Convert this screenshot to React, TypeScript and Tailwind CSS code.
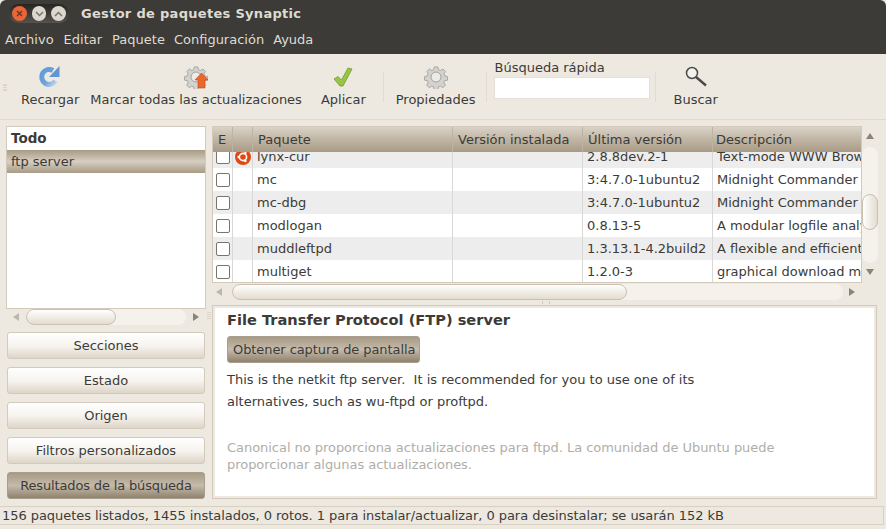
const rows = [
  ["lynx-cur", "", "2.8.8dev.2-1", "Text-mode WWW Browser"],
  ["mc", "", "3:4.7.0-1ubuntu2", "Midnight Commander"],
  ["mc-dbg", "", "3:4.7.0-1ubuntu2", "Midnight Commander"],
  ["modlogan", "", "0.8.13-5", "A modular logfile analyzer"],
  ["muddleftpd", "", "1.3.13.1-4.2build2", "A flexible and efficient FTP"],
  ["multiget", "", "1.2.0-3", "graphical download manager"],
];

const cols = ["w-[130px]", "w-[130px]"];

function Reload() {
  return (
    <svg width="24" height="24" viewBox="0 0 24 24">
      <defs>
        <linearGradient id="rl" x1="0" y1="0" x2="1" y2="1">
          <stop offset="0" stopColor="#5f9ad8" />
          <stop offset="0.6" stopColor="#6fa3dc" />
          <stop offset="1" stopColor="#c4d8ee" />
        </linearGradient>
      </defs>
      <path d="M17.5 16A7.5 7.5 0 1 1 15 5.5" fill="none" stroke="url(#rl)" strokeWidth="5" />
      <polygon points="21.5,1 21.5,12 11,12" fill="#5f97d4" />
    </svg>
  );
}

function Gear({ arrow }: { arrow?: boolean }) {
  return (
    <svg width="24" height="24" viewBox="0 0 24 24">
      <path
        d="M10 1h4l.6 3 2.2.9 2.6-1.7 2.8 2.8-1.7 2.6.9 2.2 3 .6v4l-3 .6-.9 2.2 1.7 2.6-2.8 2.8-2.6-1.7-2.2.9-.6 3h-4l-.6-3-2.2-.9-2.6 1.7-2.8-2.8 1.7-2.6-.9-2.2-3-.6v-4l3-.6.9-2.2L2 6l2.8-2.8 2.6 1.7 2.2-.9Z"
        transform="translate(1 1) scale(.92)"
        fill="#d3d2ce"
        stroke="#a3a29e"
      />
      <circle cx="12" cy="12" r="5" fill="#ecebe7" stroke="#a3a29e" />
      {arrow && <polygon points="17.5,8 24,15 21,15 21,23 14,23 14,15 11,15" fill="#e9682c" stroke="#c24a18" strokeWidth="0.6" />}
    </svg>
  );
}

function Arrow({ dir, dim }: { dir: "l" | "r" | "u" | "d"; dim?: boolean }) {
  const p = { l: "6,0 6,8 0,4", r: "0,0 0,8 6,4", u: "0,6 8,6 4,0", d: "0,0 8,0 4,6" }[dir];
  return (
    <svg width="8" height="8" viewBox="0 0 8 8" className="shrink-0">
      <polygon points={p} fill={dim ? "#bdb8ad" : "#8a8478"} />
    </svg>
  );
}

function ToolItem({ label, icon, className }: { label: string; icon: React.ReactNode; className: string }) {
  return (
    <div className={"flex flex-col items-center " + className}>
      <div className="h-[24px] w-[24px] flex items-center justify-center">{icon}</div>
      <span className="mt-[1px] leading-[20px] text-[#3c3b37]">{label}</span>
    </div>
  );
}

function Sep({ className }: { className: string }) {
  return <div className={"w-px h-[30px] bg-[#e2dccf] " + className} />;
}

function SideButton({ label, active }: { label: string; active?: boolean }) {
  return (
    <div
      className={
        "h-[27px] flex items-center justify-center rounded-[3px] border text-[#3c3b37] " +
        (active
          ? "tracking-[-0.15px] border-[#a89e8c] bg-gradient-to-b from-[#a89a85] via-[#c5bbac] to-[#8f826e]"
          : "border-[#d3cabb] bg-gradient-to-b from-white via-[#f7f4ef] to-[#ddd5c8]")
      }
    >
      {label}
    </div>
  );
}

export default function App() {
  return (
    <div
      className="w-[886px] h-[529px] overflow-hidden flex flex-col bg-[#ede9e1] text-[13px] text-[#3c3b37]"
      style={{ fontFamily: '"DejaVu Sans", sans-serif' }}
    >
      <div className="h-[54px] rounded-t-[6px] bg-[#3c3b37] text-[#dfdbd2] shrink-0">
        <div className="h-[27px] flex items-center pl-[9px]">
          <div className="flex items-center gap-[5px] h-[19px] w-[60px] rounded-full bg-gradient-to-b from-[#262522] to-[#55534e] px-[3px]">
            <div className="w-[15px] h-[15px] rounded-full bg-[#e8663a] flex items-center justify-center">
              <svg width="7" height="7" viewBox="0 0 7 7"><path d="M1 1l5 5M6 1L1 6" stroke="#6b3320" strokeWidth="1.4" /></svg>
            </div>
            <div className="w-[15px] h-[15px] rounded-full bg-[#dcd8ce] flex items-center justify-center">
              <svg width="9" height="6" viewBox="0 0 9 6"><path d="M1 1l3.5 3.5L8 1" fill="none" stroke="#77736a" strokeWidth="1.5" /></svg>
            </div>
            <div className="w-[15px] h-[15px] rounded-full bg-[#dcd8ce] flex items-center justify-center">
              <svg width="9" height="6" viewBox="0 0 9 6"><path d="M1 5l3.5-3.5L8 5" fill="none" stroke="#77736a" strokeWidth="1.5" /></svg>
            </div>
          </div>
          <span className="ml-[12px] font-bold tracking-[0.3px] text-[13px]">Gestor de paquetes Synaptic</span>
        </div>
        <div className="flex gap-[10px] pl-[5px] h-[26px] items-center">
          <span>Archivo</span>
          <span>Editar</span>
          <span>Paquete</span>
          <span className="-ml-[1px]">Configuración</span>
          <span className="-ml-[1px]">Ayuda</span>
        </div>
      </div>

      <div className="h-[66px] shrink-0 flex items-start pt-[11px] pl-[3px] border-b border-[#dfd9cd]">
        <div className="w-[4px] h-[7px] mt-[19px] border-y border-[#dcd6ca] bg-[linear-gradient(#dcd6ca_1px,transparent_1px)] bg-[length:4px_2px]" />
        <ToolItem label="Recargar" icon={<Reload />} className="ml-[14px]" />
        <ToolItem label="Marcar todas las actualizaciones" icon={<Gear arrow />} className="ml-[11px]" />
        <ToolItem
          label="Aplicar"
          icon={
            <svg width="24" height="24" viewBox="0 0 24 24">
              <path d="M3 14L7 11.5 10.5 15 17 3 21 4 12 21 9 21Z" fill="#9ac544" stroke="#6b9a2c" strokeWidth="0.8" />
            </svg>
          }
          className="ml-[19px]"
        />
        <Sep className="ml-[17px] mt-[7px]" />
        <ToolItem label="Propiedades" icon={<Gear />} className="ml-[12px]" />
        <Sep className="ml-[11px] mt-[7px]" />
        <div className="ml-[7px] w-[156px] -mt-[7px]">
          <div className="leading-[19px]">Búsqueda rápida</div>
          <div className="h-[22px] bg-white border border-[#e6e0d4]" />
        </div>
        <Sep className="ml-[5px] mt-[7px]" />
        <ToolItem
          label="Buscar"
          icon={
            <svg width="24" height="24" viewBox="0 0 24 24">
              <circle cx="8" cy="8" r="5.5" fill="#f4f2ee" stroke="#4a4a48" strokeWidth="1.5" />
              <path d="M12 12l10 8.5" stroke="#4a4a48" strokeWidth="2.4" />
            </svg>
          }
          className="ml-[17px]"
        />
      </div>

      <div className="flex-1 flex pt-[6px] pl-[6px] pr-[6px] min-h-0">
        <div className="w-[200px] shrink-0 flex flex-col">
          <div className="h-[183px] border border-[#d3cabb] bg-white">
            <div className="h-[23px] pl-[4px] leading-[23px] font-bold text-[13.5px]">Todo</div>
            <div className="h-[23px] pl-[4px] leading-[24px] bg-gradient-to-b from-[#a89a85] via-[#d6cec2] to-[#a89a85]">ftp server</div>
          </div>
          <div className="h-[16px] flex items-center pl-[7px] pr-[5px]">
            <Arrow dir="l" dim />
            <div className="flex-1 h-[16px] ml-[5px] mr-[7px] rounded-full bg-[#f5f2ec]">
              <div className="w-[90px] h-[16px] rounded-full border border-[#c9c0b0] bg-gradient-to-b from-white to-[#e3dccf]" />
            </div>
            <Arrow dir="r" />
          </div>
          <div className="mt-[7px] mx-[1px] flex flex-col gap-[8px]">
            <SideButton label="Secciones" />
            <SideButton label="Estado" />
            <SideButton label="Origen" />
            <SideButton label="Filtros personalizados" />
            <SideButton label="Resultados de la búsqueda" active />
          </div>
        </div>

        <div className="ml-[6px] flex-1 flex flex-col min-w-0">
          <div className="flex h-[157px]">
            <div className="w-[650px] border border-[#d3cabb] bg-white overflow-hidden">
              <div className="relative z-10 flex h-[25px] bg-gradient-to-b from-[#d9d2c6] to-[#a89a85]">
                <div className="w-[20px] border-r border-[#bdb3a2] pl-[5px] leading-[25px]">E</div>
                <div className="w-[20px] border-r border-[#bdb3a2]" />
                <div className="w-[200px] border-r border-[#bdb3a2] pl-[5px] leading-[25px]">Paquete</div>
                <div className={cols[0] + " border-r border-[#bdb3a2] pl-[5px] leading-[25px]"}>Versión instalada</div>
                <div className={cols[1] + " border-r border-[#bdb3a2] pl-[5px] leading-[25px]"}>Última versión</div>
                <div className="flex-1 pl-[3px] leading-[25px]">Descripción</div>
              </div>
              <div className="-mt-[7px]">
                {rows.map((r, i) => (
                  <div key={r[0]} className={"flex h-[23px] leading-[23px] whitespace-nowrap " + (i % 2 === 0 ? "bg-[#ededed]" : "bg-white")}>
                    <div className="w-[20px] border-r border-[#d8d8d8] flex items-center justify-center">
                      <div className="w-[14px] h-[14px] rounded-[2px] border border-[#77756f] bg-white" />
                    </div>
                    <div className="w-[20px] border-r border-[#d8d8d8] flex items-center justify-center">
                      {i === 0 && (
                        <svg width="16" height="16" viewBox="0 0 16 16">
                          <circle cx="8" cy="8" r="8" fill="#dd4814" />
                          <circle cx="8" cy="8" r="3.6" fill="none" stroke="#fff" strokeWidth="1.6" />
                          <circle cx="3.6" cy="8" r="1.2" fill="#fff" />
                          <circle cx="10.4" cy="4" r="1.2" fill="#fff" />
                          <circle cx="10.4" cy="12" r="1.2" fill="#fff" />
                        </svg>
                      )}
                    </div>
                    <div className="w-[200px] border-r border-[#d8d8d8] pl-[4px]">{r[0]}</div>
                    <div className={cols[0] + " border-r border-[#d8d8d8] pl-[4px]"}>{r[1]}</div>
                    <div className={cols[1] + " border-r border-[#d8d8d8] pl-[4px]"}>{r[2]}</div>
                    <div className="flex-1 pl-[4px] overflow-hidden">{r[3]}</div>
                  </div>
                ))}
              </div>
            </div>
            <div className="w-[16px] flex flex-col items-center">
              <div className="h-[21px] flex items-center"><Arrow dir="u" /></div>
              <div className="relative flex-1 w-[16px] rounded-full bg-[#f5f2ec]">
                <div className="absolute top-[47px] w-[16px] h-[36px] rounded-full border border-[#c9c0b0] bg-gradient-to-r from-white to-[#e3dccf]" />
              </div>
              <div className="h-[20px] flex items-center"><Arrow dir="d" /></div>
            </div>
          </div>
          <div className="h-[16px] flex items-center mt-[1px] pl-[4px] pr-[23px]">
            <Arrow dir="l" dim />
            <div className="flex-1 h-[16px] ml-[8px] mr-[6px] rounded-full bg-[#f5f2ec]">
              <div className="w-[395px] h-[16px] rounded-full border border-[#c9c0b0] bg-gradient-to-b from-white to-[#e3dccf]" />
            </div>
            <Arrow dir="r" />
          </div>
          <div className="h-[5px] flex items-center justify-center">
            <div className="w-[8px] h-[3px] border-x border-[#d3cabb]" />
          </div>
          <div className="relative h-[194px] w-[665px] border border-[#d3cabb] p-[2px]">
            <div className="absolute -left-[6px] top-[6px] w-[4px] h-[7px] bg-[linear-gradient(#dcd6ca_1px,transparent_1px)] bg-[length:4px_2px]" />
            <div className="h-full bg-white pl-[12px] pt-[2px]">
              <div className="font-bold text-[14.6px] text-[#3c3b37] leading-[20px]">File Transfer Protocol (FTP) server</div>
              <div className="mt-[6px] w-fit h-[27px] pl-[5px] pr-[4px] leading-[25px] tracking-[-0.08px] rounded-[3px] border border-[#a89e8c] bg-gradient-to-b from-[#a89a85] via-[#c5bbac] to-[#8f826e]">
                Obtener captura de pantalla
              </div>
              <p className="mt-[6px] leading-[22px]">
                This is the netkit ftp server.&nbsp; It is recommended for you to use one of its
                <br />
                alternatives, such as wu-ftpd or proftpd.
              </p>
              <p className="mt-[26px] leading-[17px] tracking-[-0.04px] text-[#b0aea8]">
                Canonical no proporciona actualizaciones para ftpd. La comunidad de Ubuntu puede
                <br />
                proporcionar algunas actualizaciones.
              </p>
            </div>
          </div>
        </div>
      </div>

      <div className="h-[19px] shrink-0 mb-[4px] mr-[2px] px-[2px] leading-[17px] tracking-[-0.05px] border-y border-r border-[#d8d0c0] whitespace-nowrap">
        156 paquetes listados, 1455 instalados, 0 rotos. 1 para instalar/actualizar, 0 para desinstalar; se usarán 152 kB
      </div>
    </div>
  );
}
